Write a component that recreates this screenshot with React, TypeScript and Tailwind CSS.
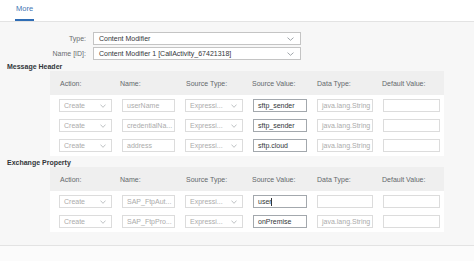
import React from "react";

const Chevron = ({ color = "#9aa0a6", w = 6 }: { color?: string; w?: number }) => (
  <svg width={w} height={4} viewBox={`0 0 ${w} 4`} className="shrink-0">
    <path d={`M0.5 0.6 L${w / 2} 3.3 L${w - 0.5} 0.6`} fill="none" stroke={color} strokeWidth={0.8} />
  </svg>
);

const DSelect = ({ text }: { text: string }) => (
  <div className="h-[13px] border border-[#dcdcdc] bg-white flex items-center justify-between pl-[4px] pr-[5px] text-[#ababab] whitespace-nowrap overflow-hidden">
    <span>{text}</span>
    <Chevron color="#b0b4b8" />
  </div>
);

const DInput = ({ text = "" }: { text?: string }) => (
  <div className="h-[13px] border border-[#dcdcdc] bg-white flex items-center pl-[4px] text-[#ababab] whitespace-nowrap overflow-hidden">
    {text}
  </div>
);

const EInput = ({ text, caret = false }: { text: string; caret?: boolean }) => (
  <div className="h-[13px] border border-[#a3a8ad] bg-white flex items-center pl-[4px] text-[#32363a] whitespace-nowrap overflow-hidden">
    <span>{text}</span>
    {caret && <span className="inline-block w-px h-[8px] bg-[#32363a] -ml-[1px]" />}
  </div>
);

const cols = "grid grid-cols-[53px_53px_58px_54px_56px_57px] gap-x-[10px]";

const Header = () => (
  <div className={`${cols} h-[24px] items-center bg-[#efefef] pl-[9px] pr-[4px] text-[#64686c]`}>
    <span className="pl-[1px]">Action:</span>
    <span className="-ml-[2px]">Name:</span>
    <span className="pl-[1px]">Source Type:</span>
    <span className="-ml-[1px]">Source Value:</span>
    <span>Data Type:</span>
    <span className="-ml-[1px]">Default Value:</span>
  </div>
);

type Row = { name: string; value: string; dtype: string; caret?: boolean };

const Rows = ({ rows }: { rows: Row[] }) => (
  <div className="bg-white pl-[9px] pr-[4px] pt-[4px] pb-[4px] flex flex-col gap-[7px]">
    {rows.map((r, i) => (
      <div key={i} className={cols}>
        <DSelect text="Create" />
        <DInput text={r.name} />
        <DSelect text="Expressi..." />
        <EInput text={r.value} caret={r.caret} />
        <DInput text={r.dtype} />
        <DInput />
      </div>
    ))}
  </div>
);

export default function App() {
  return (
    <div
      className="w-[474px] h-[261px] overflow-hidden bg-[#f7f7f7] flex flex-col text-[7px] leading-none"
      style={{ fontFamily: '"Liberation Sans", Arial, sans-serif' }}
    >
      <div className="h-[22px] bg-white border-b border-[#e3e3e3] flex shrink-0">
        <div className="ml-[15px] h-full flex flex-col justify-end">
          <span className="text-[7.5px] text-[#3f74b3] px-[1px] mb-[7px]">More</span>
          <div className="h-[2px] bg-[#2f6db5]" />
        </div>
      </div>

      <div className="flex flex-col gap-[2px] pt-[10px]">
        <div className="flex items-center">
          <span className="w-[86px] text-right text-[#6a6d70]">Type:</span>
          <div className="ml-[7px] w-[208px] h-[13px] border border-[#c4c4c4] bg-white flex items-center justify-between pl-[5px] pr-[6px] text-[#32363a]">
            <span>Content Modifier</span>
            <Chevron color="#8c9298" w={7} />
          </div>
        </div>
        <div className="flex items-center">
          <span className="w-[86px] text-right text-[#6a6d70]">Name [ID]:</span>
          <div className="ml-[7px] w-[208px] h-[13px] border border-[#c4c4c4] bg-white flex items-center justify-between pl-[5px] pr-[6px] text-[#32363a]">
            <span>Content Modifier 1 [CallActivity_67421318]</span>
            <Chevron color="#8c9298" w={7} />
          </div>
        </div>
      </div>

      <div className="h-[11px] flex items-center pl-[7px] pt-[1px] font-bold text-[#32363a]">Message Header</div>
      <div className="ml-[50px] w-[394px]">
        <Header />
        <Rows
          rows={[
            { name: "userName", value: "sftp_sender", dtype: "java.lang.String" },
            { name: "credentialNa...", value: "sftp_sender", dtype: "java.lang.String" },
            { name: "address", value: "sftp.cloud", dtype: "java.lang.String" },
          ]}
        />
      </div>

      <div className="h-[11px] flex items-center pl-[7px] pt-[1px] font-bold text-[#32363a]">Exchange Property</div>
      <div className="ml-[50px] w-[394px]">
        <Header />
        <Rows
          rows={[
            { name: "SAP_FtpAut...", value: "user", dtype: "", caret: true },
            { name: "SAP_FtpPro...", value: "onPremise", dtype: "java.lang.String" },
          ]}
        />
      </div>

      <div className="h-[13px] shrink-0" />
      <div className="flex-1 bg-[#fbfbfb] border-t border-[#e3e3e3]" />
    </div>
  );
}
